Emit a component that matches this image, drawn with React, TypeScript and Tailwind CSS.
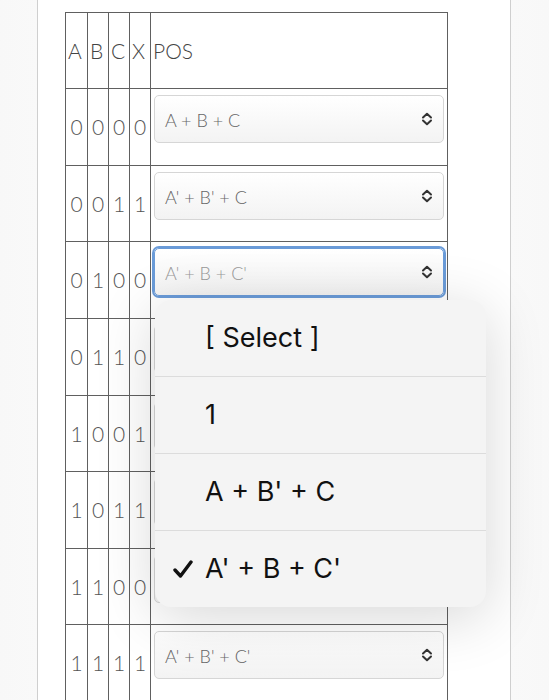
import { Fragment } from "react";

type Row = {
  bits: [string, string, string, string];
  pos: string;
  focused?: boolean;
};

const rows: Row[] = [
  { bits: ["0", "0", "0", "0"], pos: "A + B + C" },
  { bits: ["0", "0", "1", "1"], pos: "A' + B' + C" },
  { bits: ["0", "1", "0", "0"], pos: "A' + B + C'", focused: true },
  { bits: ["0", "1", "1", "0"], pos: "A' + B' + C" },
  { bits: ["1", "0", "0", "1"], pos: "A + B + C'" },
  { bits: ["1", "0", "1", "1"], pos: "A + B' + C" },
  { bits: ["1", "1", "0", "0"], pos: "A' + B + C" },
  { bits: ["1", "1", "1", "1"], pos: "A' + B' + C'" },
];

const options = ["[ Select ]", "1", "A + B' + C", "A' + B + C'"];
const selectedOption = "A' + B + C'";

const cell = "border-r-[1.5px] border-b-[1.5px] border-[#606060]";

export default function App() {
  return (
    <div className="relative h-[700px] w-[549px] overflow-hidden bg-gradient-to-r from-[#f8f8f8] via-white to-[#f8f8f8] font-['Lato',sans-serif]">
      <div className="ml-[37px] h-full w-[474px] border-x border-[#cfcfcf] bg-white pt-[12px] pl-[27px]">
        <div className="grid w-[383px] grid-cols-[22px_21px_21px_21px_1fr] grid-rows-[76px_77px_76px_77px_77px_76px_77px_76px_76px] border-t-[1.5px] border-l-[1.5px] border-[#606060] text-[21px] font-light text-[#555]">
          {["A", "B", "C", "X", "POS"].map((label) => (
            <div
              className={`${cell} flex items-center px-[2px] text-[#444]`}
              key={label}
            >
              {label}
            </div>
          ))}
          {rows.map((row, index) => (
            <Fragment key={index}>
              {row.bits.map((bit, bitIndex) => (
                <div
                  className={`${cell} flex items-center justify-center`}
                  key={bitIndex}
                >
                  {bit}
                </div>
              ))}
              <div className={`${cell} px-[3px] pt-[6px]`}>
                <SelectBox focused={row.focused} value={row.pos} />
              </div>
            </Fragment>
          ))}
        </div>
      </div>

      <div className="absolute top-[300px] left-[155px] w-[331px] rounded-[16px] bg-[#f4f4f4] shadow-[0_10px_60px_rgba(0,0,0,0.16)] font-['Inter',sans-serif]">
        {options.map((option, index) => (
          <Fragment key={option}>
            {index > 0 ? <div className="h-px bg-[#dcdcdc]" /> : null}
            <div className="flex h-[76px] items-center pl-[18px] text-[27px] text-[#111]">
              <span className="flex w-[32px] shrink-0 items-center">
                {option === selectedOption ? <CheckMark /> : null}
              </span>
              <span>{option}</span>
            </div>
          </Fragment>
        ))}
      </div>
    </div>
  );
}

function SelectBox({ focused, value }: { focused?: boolean; value: string }) {
  return (
    <div
      className={`flex h-[48px] items-center justify-between rounded-[5px] border bg-gradient-to-b from-white to-[#f3f3f3] px-[10px] ${
        focused
          ? "border-[#6a9bd8] ring-2 ring-[#6a9bd8]"
          : "border-[#d6d6d6]"
      }`}
    >
      <span
        className={`pt-[3px] text-[18px] font-light ${
          focused ? "text-[#999]" : "text-[#666]"
        }`}
      >
        {value}
      </span>
      <svg
        aria-hidden="true"
        className="shrink-0"
        fill="none"
        height="14"
        stroke="#333"
        strokeLinecap="round"
        strokeLinejoin="round"
        strokeWidth="2"
        viewBox="0 0 12 14"
        width="12"
      >
        <polyline points="2,5.5 6,1.8 10,5.5" />
        <polyline points="2,8.5 6,12.2 10,8.5" />
      </svg>
    </div>
  );
}

function CheckMark() {
  return (
    <svg
      aria-hidden="true"
      fill="none"
      height="20"
      stroke="#111"
      strokeLinecap="round"
      strokeLinejoin="round"
      strokeWidth="3.4"
      viewBox="0 0 20 20"
      width="20"
    >
      <polyline points="2,11 7.5,17 18,3" />
    </svg>
  );
}
